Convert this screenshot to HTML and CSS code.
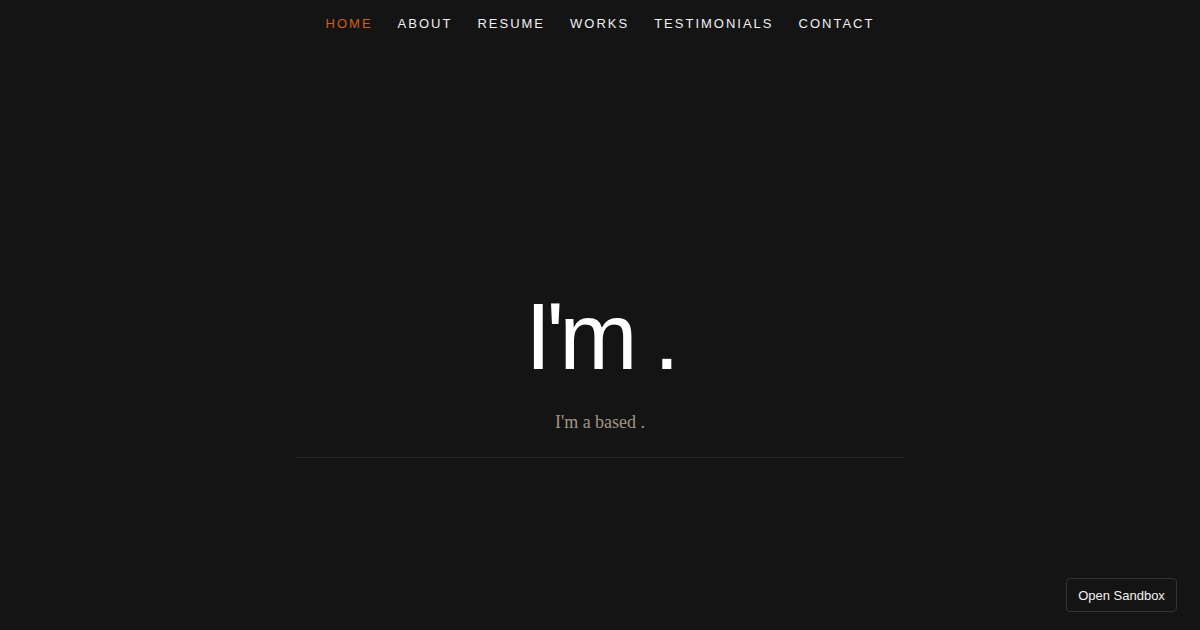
FILE: index.html
```html
<!DOCTYPE html>
<html>
<head>
<meta charset="utf-8">
<link rel="stylesheet" href="styles.css">
</head>
<body>
<nav class="nav">
  <a class="nav-link active">Home</a>
  <a class="nav-link">About</a>
  <a class="nav-link">Resume</a>
  <a class="nav-link">Works</a>
  <a class="nav-link">Testimonials</a>
  <a class="nav-link">Contact</a>
</nav>
<main class="hero">
  <div class="hero-inner">
    <h1 class="title">I'm .</h1>
    <h3 class="subtitle">I'm a based .</h3>
    <hr class="rule">
  </div>
</main>
<button class="sandbox">Open Sandbox</button>
</body>
</html>
```

FILE: styles.css
```css
* { box-sizing: border-box; }
html, body { margin: 0; height: 100%; }
body {
  background: #151414;
  font-family: "Liberation Sans", Arial, sans-serif;
  color: #fff;
  overflow: hidden;
}
.nav {
  display: flex;
  justify-content: center;
  padding-top: 16px;
  height: 48px;
}
.nav-link {
  font-size: 13px;
  letter-spacing: 2px;
  text-transform: uppercase;
  color: #f0f0f0;
  padding: 0 12.5px;
  line-height: 15px;
}
.nav-link.active { color: #cc5f1a; }
.hero {
  display: flex;
  justify-content: center;
  padding-top: 239px;
}
.hero-inner {
  width: 610px;
  text-align: center;
}
.title {
  margin: 0;
  font-weight: 400;
  font-size: 94px;
  line-height: 100px;
  letter-spacing: -5px;
  color: #fff;
}
.subtitle {
  margin: 23px 0 0;
  font-family: "Liberation Serif", "Times New Roman", serif;
  font-weight: 400;
  font-size: 18px;
  line-height: 24px;
  color: #a39585;
}
.rule {
  margin: 23px 0 0;
  border: 0;
  border-top: 1px solid #252323;
}
.sandbox {
  position: fixed;
  right: 23px;
  bottom: 18px;
  width: 111px;
  height: 34px;
  padding: 0;
  background: #151414;
  border: 1px solid #333;
  border-radius: 4px;
  color: #f2f2f2;
  font-family: "Liberation Sans", Arial, sans-serif;
  font-size: 13px;
}
```
